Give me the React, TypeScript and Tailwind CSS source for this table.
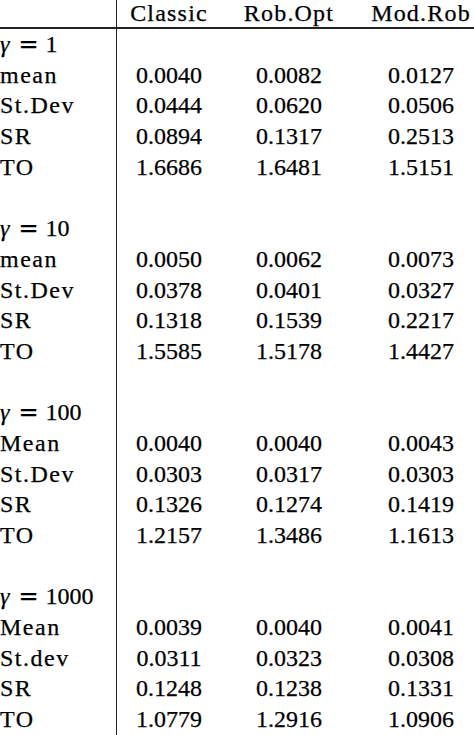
type Row = { label: string; values?: [string, string, string]; gamma?: string };

const blocks: { gamma: string; rows: [string, string, string, string][] }[] = [
  {
    gamma: "1",
    rows: [
      ["mean", "0.0040", "0.0082", "0.0127"],
      ["St.Dev", "0.0444", "0.0620", "0.0506"],
      ["SR", "0.0894", "0.1317", "0.2513"],
      ["TO", "1.6686", "1.6481", "1.5151"],
    ],
  },
  {
    gamma: "10",
    rows: [
      ["mean", "0.0050", "0.0062", "0.0073"],
      ["St.Dev", "0.0378", "0.0401", "0.0327"],
      ["SR", "0.1318", "0.1539", "0.2217"],
      ["TO", "1.5585", "1.5178", "1.4427"],
    ],
  },
  {
    gamma: "100",
    rows: [
      ["Mean", "0.0040", "0.0040", "0.0043"],
      ["St.Dev", "0.0303", "0.0317", "0.0303"],
      ["SR", "0.1326", "0.1274", "0.1419"],
      ["TO", "1.2157", "1.3486", "1.1613"],
    ],
  },
  {
    gamma: "1000",
    rows: [
      ["Mean", "0.0039", "0.0040", "0.0041"],
      ["St.dev", "0.0311", "0.0323", "0.0308"],
      ["SR", "0.1248", "0.1238", "0.1331"],
      ["TO", "1.0779", "1.2916", "1.0906"],
    ],
  },
];

// flatten into table rows, with an empty row between blocks
const rows: Row[] = [];
blocks.forEach((b, i) => {
  if (i > 0) rows.push({ label: "" });
  rows.push({ label: "", gamma: b.gamma });
  b.rows.forEach((r) => rows.push({ label: r[0], values: [r[1], r[2], r[3]] }));
});

function TableRow({ row }: { row: Row }) {
  return (
    <div className="flex h-[30.7px] leading-[30.7px] whitespace-nowrap">
      <div className="w-[117px] shrink-0 border-r-[1.5px] border-[#222] tracking-[1.5px]">
        {row.gamma ? (
          <span className="tracking-normal">
            <i className="mr-[2px]">γ</i>
            <span className="mx-[7px] font-['DejaVu_Serif',serif] font-light">=</span>
            {row.gamma}
          </span>
        ) : (
          row.label
        )}
      </div>
      <div className="w-[104px] shrink-0 text-center">{row.values?.[0]}</div>
      <div className="w-[136px] shrink-0 text-center">{row.values?.[1]}</div>
      <div className="w-[128px] shrink-0 text-center">{row.values?.[2]}</div>
    </div>
  );
}

export default function App() {
  return (
    <div className="w-[474px] h-[735px] overflow-hidden bg-white text-black text-[24px] font-['Liberation_Serif',serif] [-webkit-text-stroke:0.25px_black]">
      <div className="w-[485px]">
        {/* header */}
        <div className="flex h-[27px] leading-[26px] whitespace-nowrap tracking-[1.2px]">
          <div className="w-[117px] shrink-0 border-r-[1.5px] border-[#222]" />
          <div className="w-[104px] shrink-0 text-center">Classic</div>
          <div className="w-[136px] shrink-0 text-center">Rob.Opt</div>
          <div className="w-[128px] shrink-0 text-center">Mod.Rob</div>
        </div>
        <div className="h-[2px] bg-[#222]" />
        {rows.map((r, i) => (
          <TableRow key={i} row={r} />
        ))}
      </div>
    </div>
  );
}
